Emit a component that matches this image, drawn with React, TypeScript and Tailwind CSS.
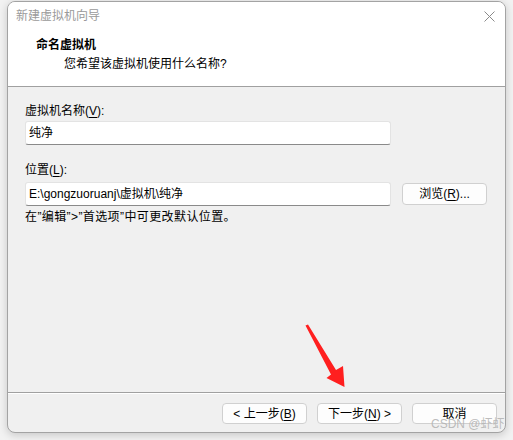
import React from "react";

const font = { fontFamily: '"Liberation Sans", "Noto Sans CJK SC", sans-serif' };

function U({ children }: { children: React.ReactNode }) {
  return <span className="underline underline-offset-2 decoration-1">{children}</span>;
}

export default function App() {
  return (
    <div className="relative w-[513px] h-[440px] bg-[#f2f2f2] overflow-hidden text-[12px] text-black" style={font}>
      <div className="ml-[7px] mt-px w-[499px] h-[432px] border border-[#a3a3a3] rounded-[8px] overflow-hidden flex flex-col bg-[#f0f0f0] shadow-[0_2px_8px_rgba(0,0,0,0.18)]">
        {/* title + header */}
        <div className="bg-white h-[85px] border-b border-[#a0a0a0] flex flex-col">
          <div className="h-[27px] flex items-center justify-between pl-[8px] pr-[10px]">
            <span className="text-[#9a9a9a] leading-[16px]">新建虚拟机向导</span>
            <svg width="11" height="11" viewBox="0 0 11 11" className="mt-[1px]">
              <path d="M0.5 0.5 L10.5 10.5 M10.5 0.5 L0.5 10.5" stroke="#8a8a8a" strokeWidth="1" fill="none" />
            </svg>
          </div>
          <div className="pl-[28px] pt-[8px] font-bold leading-[16px]">命名虚拟机</div>
          <div className="pl-[56px] pt-[3px] leading-[16px]">您希望该虚拟机使用什么名称?</div>
        </div>
        {/* body */}
        <div className="flex-1 flex flex-col pl-[17px] pt-[16px]">
          <div className="leading-[16px]">
            虚拟机名称(<U>V</U>):
          </div>
          <div className="mt-[2px] w-[366px] h-[24px] bg-white border border-[#e3e3e3] border-b-[#8a8a8a] rounded-[3px] flex items-center pl-[3px] leading-[16px]">
            纯净
          </div>
          <div className="mt-[17px] leading-[16px]">
            位置(<U>L</U>):
          </div>
          <div className="mt-[4px] flex items-center">
            <div className="w-[366px] h-[24px] bg-white border border-[#e3e3e3] border-b-[#8a8a8a] rounded-[3px] flex items-center pl-[3px] leading-[16px]">
              E:\gongzuoruanj\虚拟机\纯净
            </div>
            <div className="ml-[11px] w-[85px] h-[22px] bg-[#fdfdfd] border border-[#d0d0d0] rounded-[4px] flex items-center justify-center leading-[16px]">
              浏览(<U>R</U>)...
            </div>
          </div>
          <div className="mt-[3px] leading-[16px] tracking-[0.4px]">在”编辑”&gt;”首选项”中可更改默认位置。</div>
        </div>
        {/* footer */}
        <div className="h-[40px] border-t border-[#a0a0a0] shadow-[inset_0_1px_0_#ffffff] flex items-start justify-end pr-[8px] pt-[10px] gap-[10px]">
          <div className="w-[85px] h-[21px] bg-[#fdfdfd] border border-[#d0d0d0] rounded-[4px] flex items-center justify-center leading-[16px]">
            &lt; 上一步(<U>B</U>)
          </div>
          <div className="w-[85px] h-[21px] bg-[#fdfdfd] border border-[#d0d0d0] rounded-[4px] flex items-center justify-center leading-[16px]">
            下一步(<U>N</U>) &gt;
          </div>
          <div className="w-[85px] h-[21px] bg-[#fdfdfd] border border-[#d0d0d0] rounded-[4px] flex items-center justify-center leading-[16px]">
            取消
          </div>
        </div>
      </div>
      {/* red arrow annotation */}
      <svg className="absolute left-0 top-0 pointer-events-none" width="513" height="440" viewBox="0 0 513 440">
        <polygon points="305.5,325.5 308,324.5 336,370 343,366 344.5,387 326.5,378 331,374.5" fill="#ff1f1f" />
      </svg>
      {/* watermark */}
      <div className="absolute left-[431px] top-[416px] text-[12px] leading-[16px] text-[#b4b4b4]/90" style={font}>
        CSDN @虾虾
      </div>
    </div>
  );
}
